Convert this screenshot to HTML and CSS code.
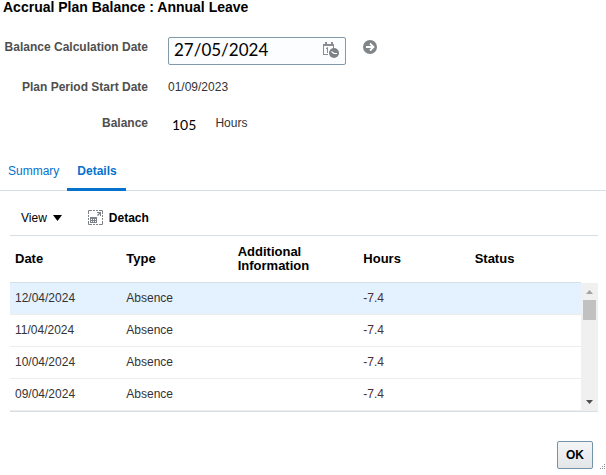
FILE: index.html
```html
<!DOCTYPE html>
<html lang="en">
<head>
    <meta charset="UTF-8">
    <meta name="viewport" content="width=device-width, initial-scale=1.0">
    <title>Accrual Plan Balance</title>
    <link rel="stylesheet" href="styles.css">
</head>
<body>
    <h1>Accrual Plan Balance : Annual Leave</h1>

    <form class="details">
        <label class="label" for="calc-date">Balance Calculation Date</label>
        <div class="date-row">
            <div class="date-field">
                <input type="text" id="calc-date" value="27/05/2024">
                <button type="button" class="icon-button" aria-label="Select date">
                    <svg width="16" height="16" viewBox="0 0 16 16">
                        <path d="M0 2h2V0h2v2h4V0h2v2h1v4h-1V4H1v8h4v1H0z" fill="#878d92"/>
                        <path d="M0 2h11v2H0zM3 6l2-1v6H4V7H3z" fill="#878d92"/>
                        <circle cx="11" cy="11" r="5" fill="#7c8287"/>
                        <path d="M8.500 9.500l2.500 2h3" fill="none" stroke="#fff" stroke-width="1.200"/>
                    </svg>
                </button>
            </div>
            <button type="button" class="icon-button" aria-label="Go">
                <svg width="14" height="14" viewBox="0 0 14 14">
                    <circle cx="7" cy="7" r="7" fill="#7f8589"/>
                    <path d="M3 7h7M7 3.500L10.500 7 7 10.500" fill="none" stroke="#fff" stroke-width="1.800"/>
                </svg>
            </button>
        </div>

        <span class="label">Plan Period Start Date</span>
        <span>01/09/2023</span>

        <span class="label balance-label">Balance</span>
        <div class="balance"><span class="amount">105</span><span>Hours</span></div>
    </form>

    <nav class="tabs">
        <a href="#summary">Summary</a>
        <a href="#details" class="active">Details</a>
    </nav>

    <div class="toolbar">
        <button type="button" class="view">View
            <svg width="9" height="6" viewBox="0 0 9 6"><path d="M0 0h9L4.500 6z" fill="#000"/></svg>
        </button>
        <button type="button" class="detach">
            <svg width="15" height="15" viewBox="0 0 15 15">
                <path d="M.5 4V.5H4M5 .5h2M8 .5h2M11 .5h3.500V4M14.500 5v2M14.500 8v2M14.500 11v3.500H11M10 14.500H8M7 14.500H5M4 14.500H.5V11M.5 10V8M.5 7V5" fill="none" stroke="#7d8388"/>
                <path d="M2 7h7v6H2z" fill="#7d8388"/>
                <path d="M3 9h1v1H3zm2 0h1v1H5zm2 0h1v1H7zM3 11h1v1H3zm2 0h1v1H5zm2 0h1v1H7z" fill="#fff"/>
                <path d="M9 2h4v4h-1V4l-2 2-1-1 2-2H9z" fill="#7d8388"/>
            </svg>
            Detach
        </button>
    </div>

    <div class="table-box">
        <table>
            <colgroup>
                <col class="narrow"><col class="narrow"><col class="wide"><col class="narrow"><col class="narrow">
            </colgroup>
            <thead>
                <tr><th>Date</th><th>Type</th><th>Additional Information</th><th>Hours</th><th>Status</th></tr>
            </thead>
            <tbody>
                <tr class="selected"><td>12/04/2024</td><td>Absence</td><td></td><td class="hours">-7.4</td><td></td></tr>
                <tr><td>11/04/2024</td><td>Absence</td><td></td><td class="hours">-7.4</td><td></td></tr>
                <tr><td>10/04/2024</td><td>Absence</td><td></td><td class="hours">-7.4</td><td></td></tr>
                <tr><td>09/04/2024</td><td>Absence</td><td></td><td class="hours">-7.4</td><td></td></tr>
            </tbody>
        </table>
        <div class="scrollbar">
            <svg width="7" height="4" viewBox="0 0 7 4"><path d="M0 4h7L3.500 0z" fill="#a3a3a3"/></svg>
            <div class="thumb"></div>
            <svg width="7" height="4" viewBox="0 0 7 4"><path d="M0 0h7L3.500 4z" fill="#505050"/></svg>
        </div>
    </div>

    <footer>
        <button type="button" class="ok">OK</button>
        <svg class="grip" width="8" height="8" viewBox="0 0 8 8">
            <path d="M6 0h1v1H6zM4 2h1v1H4zm2 0h1v1H6zM2 4h1v1H2zm2 0h1v1H4zm2 0h1v1H6zM0 6h1v1H0zm2 0h1v1H2zm2 0h1v1H4zm2 0h1v1H6z" fill="#8f8f8f"/>
        </svg>
    </footer>
</body>
</html>
```
FILE: styles.css
```css
* {
    margin: 0;
    padding: 0;
    box-sizing: border-box;
}

body {
    font-family: "Liberation Sans", Arial, sans-serif;
    font-size: 12px;
    line-height: 14px;
    color: #333;
    background: #fff;
}

button {
    font: inherit;
    color: inherit;
    border: none;
    background: none;
    cursor: pointer;
}

svg {
    display: block;
    flex: none;
}

a {
    color: #0572ce;
    text-decoration: none;
}

h1 {
    font-size: 14px;
    line-height: 14px;
    color: #000;
    padding-left: 3px;
}

.details {
    display: grid;
    grid-template-columns: 148px 1fr;
    column-gap: 20px;
    row-gap: 15px;
    padding-top: 23px;
}

.label {
    font-weight: bold;
    color: #4f4f4f;
    text-align: right;
}

.details > label {
    padding-top: 3px;
}

.date-row {
    display: flex;
    gap: 17px;
}

.date-row > .icon-button {
    align-self: flex-start;
    padding-top: 3px;
}

.date-field {
    display: flex;
    align-items: center;
    width: 178px;
    height: 28px;
    padding: 0 6px 3px 5px;
    border: 1px solid #8199a8;
    border-radius: 2px;
    background: #fcfdff;
}

.date-field input {
    flex: 1;
    min-width: 0;
    border: none;
    outline: none;
    background: none;
    font: 17px Lato, sans-serif;
    color: #000;
}

.balance {
    display: flex;
    gap: 19px;
    padding-left: 4px;
}

.balance-label,
.balance {
    margin-top: 7px;
}

.amount {
    font: 14px/17px Lato, sans-serif;
    color: #000;
}

.tabs {
    display: flex;
    margin-top: 22px;
    border-bottom: 1px solid #d6dfe6;
}

.tabs a {
    padding: 9px 8px 12px;
}

.tabs .active {
    padding: 9px 9px 9px 10px;
    margin-bottom: -1px;
    border-bottom: 3px solid #0572ce;
    font-weight: bold;
}

.toolbar {
    display: flex;
    gap: 26px;
    padding: 19px 21px 10px;
    color: #000;
}

.toolbar button {
    display: flex;
    align-items: center;
    gap: 6px;
}

.detach {
    font-weight: bold;
}

.table-box {
    display: flex;
    margin: 0 8px 0 10px;
    border-top: 1px solid #d6dfe6;
    border-bottom: 1px solid #d6dfe6;
}

table {
    flex: 1;
    width: 100%;
    table-layout: fixed;
    border-collapse: separate;
    border-spacing: 0;
}

.narrow {
    width: 19.5%;
}

.wide {
    width: 22%;
}

th {
    height: 47px;
    padding: 0 5px;
    text-align: left;
    font-size: 13px;
    color: #000;
    border-bottom: 1px solid #d6dfe6;
}

td {
    height: 32px;
    padding: 0 5px 2px;
    border-bottom: 1px solid #ececec;
}

.hours {
    color: #4a2f2f;
}

.selected td {
    background: #e4f1ff;
}

.scrollbar {
    display: flex;
    flex-direction: column;
    align-items: center;
    width: 17px;
    margin-top: 47px;
    padding: 7px 0;
    background: #f0f0f0;
}

.thumb {
    width: 13px;
    height: 20px;
    margin: 6px 0 auto;
    background: #c1c1c1;
}

footer {
    display: flex;
    justify-content: flex-end;
    align-items: flex-end;
    gap: 5px;
    margin-top: 29px;
}

.ok {
    height: 28px;
    padding: 0 8px;
    border: 1px solid #7593a8;
    border-radius: 2px;
    background: linear-gradient(#f3f5f7, #e3e6e9);
    font-weight: bold;
    color: #000;
}

.grip {
    margin-bottom: -3px;
}
```
